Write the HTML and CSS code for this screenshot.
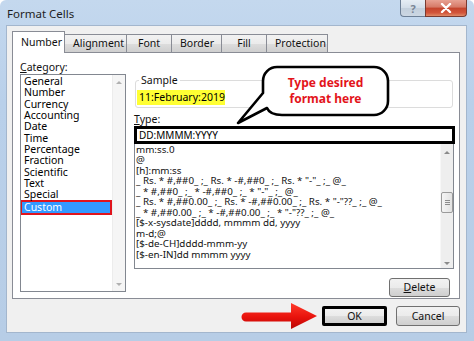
FILE: index.html
```html
<!DOCTYPE html>
<html>
<head>
<meta charset="utf-8">
<link rel="stylesheet" href="styles.css">
</head>
<body>
<div class="window">
  <div class="titlebar">
    <span class="title">Format Cells</span>
    <div class="caption-btns">
      <div class="cap-btn help">?</div>
      <div class="cap-btn close">
        <svg width="12" height="10" viewBox="0 0 12 10"><path d="M2 1 L10 9 M10 1 L2 9" stroke="#fff" stroke-width="2.4" stroke-linecap="round"/></svg>
      </div>
    </div>
  </div>
  <div class="client">
    <div class="tabs">
      <div class="tab active">Number</div>
      <div class="tab">Alignment</div>
      <div class="tab">Font</div>
      <div class="tab">Border</div>
      <div class="tab">Fill</div>
      <div class="tab">Protection</div>
    </div>
    <div class="panel">
      <div class="left">
        <div class="label"><u>C</u>ategory:</div>
        <div class="catlist">
          <div class="items">
            <div class="item">General</div>
            <div class="item">Number</div>
            <div class="item">Currency</div>
            <div class="item">Accounting</div>
            <div class="item">Date</div>
            <div class="item">Time</div>
            <div class="item">Percentage</div>
            <div class="item">Fraction</div>
            <div class="item">Scientific</div>
            <div class="item">Text</div>
            <div class="item">Special</div>
            <div class="item selected">Custom</div>
          </div>
          <div class="vscroll plain">
            <span class="arr up"></span>
            <span class="arr down"></span>
          </div>
        </div>
      </div>
      <div class="right">
        <fieldset class="sample">
          <legend>Sample</legend>
          <span class="sample-val">11:February:2019</span>
        </fieldset>
        <div class="label type-label"><u>T</u>ype:</div>
        <div class="type-input">DD:MMMM:YYYY</div>
        <div class="fmtlist">
          <div class="items">
            <div class="fitem">mm:ss.0</div>
            <div class="fitem">@</div>
            <div class="fitem">[h]:mm:ss</div>
            <div class="fitem">_ Rs. * #,##0_ ;_ Rs. * -#,##0_ ;_ Rs. * "-"_ ;_ @_</div>
            <div class="fitem">_ * #,##0_ ;_ * -#,##0_ ;_ * "-"_ ;_ @_</div>
            <div class="fitem">_ Rs. * #,##0.00_ ;_ Rs. * -#,##0.00_ ;_ Rs. * "-"??_ ;_ @_</div>
            <div class="fitem">_ * #,##0.00_ ;_ * -#,##0.00_ ;_ * "-"??_ ;_ @_</div>
            <div class="fitem">[$-x-sysdate]dddd, mmmm dd, yyyy</div>
            <div class="fitem">m-d;@</div>
            <div class="fitem">[$-de-CH]dddd-mmm-yy</div>
            <div class="fitem">[$-en-IN]dd mmmm yyyy</div>
          </div>
          <div class="vscroll">
            <span class="arr up"></span>
            <span class="thumb"><i></i><i></i><i></i></span>
            <span class="arr down"></span>
          </div>
        </div>
        <div class="delete-row"><div class="btn delete"><u>D</u>elete</div></div>
      </div>
    </div>
    <div class="buttons">
      <div class="btn ok">OK</div>
      <div class="btn cancel">Cancel</div>
    </div>
  </div>

  <div class="callout">
    <svg class="bubble" width="156" height="62" viewBox="0 0 156 62">
      <path d="M27 28 V16 A14 14 0 0 1 41 2 H138 A14 14 0 0 1 152 16 V36 A14 14 0 0 1 138 50 H46 Q34 50 31 43 L2 58 Z" fill="#fff" stroke="#000" stroke-width="2.6" stroke-linejoin="round"/>
    </svg>
    <div class="callout-text">Type desired<br>format here</div>
  </div>

  <svg class="arrow" width="80" height="30" viewBox="0 0 80 30">
    <defs>
      <linearGradient id="rg" x1="0" y1="0" x2="0" y2="1">
        <stop offset="0" stop-color="#ff3b2b"/>
        <stop offset="0.55" stop-color="#e8120c"/>
        <stop offset="1" stop-color="#b80806"/>
      </linearGradient>
    </defs>
    <path d="M5 10.5 H50 V1 L76 14 L50 27 V19.5 H5 A4.5 4.5 0 0 1 5 10.5 Z" fill="url(#rg)"/>
  </svg>
</div>
</body>
</html>
```

FILE: styles.css
```css
* { box-sizing: border-box; }
html, body { margin: 0; padding: 0; }
body {
  width: 474px;
  height: 341px;
  overflow: hidden;
  background: #ffffff;
  font-family: "Noto Sans", "Open Sans", sans-serif;
  color: #000;
}
.window {
  position: relative;
  width: 474px;
  height: 341px;
  display: flex;
  flex-direction: column;
  background: linear-gradient(180deg, #c4d8ee 0%, #b9d0ea 30%, #b7cde6 100%);
  border-radius: 6px 6px 0 0;
}
.titlebar {
  height: 25px;
  display: flex;
  align-items: flex-start;
  justify-content: space-between;
  padding-right: 7px;
}
.title {
  font-size: 11.5px;
  line-height: 14px;
  margin: 7px 0 0 7px;
  color: #1e1e1e;
}
.caption-btns { display: flex; }
.cap-btn {
  height: 17px;
  display: flex;
  align-items: center;
  justify-content: center;
  border: 1px solid #6d7f96;
  border-top: none;
}
.help {
  width: 25px;
  border-radius: 0 0 0 4px;
  border-right: none;
  background: linear-gradient(180deg, #e6edf4 0%, #d3dde8 50%, #c3cfdc 51%, #ccd7e3 100%);
  color: #7a8595;
  font-size: 11px;
  font-weight: bold;
}
.close {
  width: 42px;
  border-radius: 0 0 4px 0;
  border-color: #7a3a30;
  background: linear-gradient(180deg, #e8a293 0%, #d67966 45%, #c4442c 50%, #d2543a 80%, #e08a66 100%);
}
.client {
  margin: 0 7px 8px 6px;
  flex: 1;
  background: #f0f0f0;
  border: 1px solid #a3b6cd;
  padding: 5px 6px 0 5px;
  display: flex;
  flex-direction: column;
}
.tabs {
  display: flex;
  align-items: flex-end;
  height: 21px;
  position: relative;
  z-index: 2;
}
.tab {
  height: 18px;
  padding: 0 8px;
  font-size: 10.5px;
  line-height: 16px;
  border: 1px solid #898c95;
  border-bottom: none;
  border-left: none;
  background: linear-gradient(180deg, #f2f2f2 0%, #ebebeb 50%, #dddddd 51%, #cfcfcf 100%);
  text-align: center;
  color: #111;
}
.tab:nth-child(2) { width: 62px; }
.tab:nth-child(3) { width: 45px; }
.tab:nth-child(4) { width: 50px; }
.tab:nth-child(5) { width: 45px; }
.tab:nth-child(6) { width: 61px; }
.tab.active {
  width: 53px;
  height: 22px;
  margin-bottom: -1px;
  background: #ffffff;
  border-left: 1px solid #898c95;
  line-height: 21px;
}
.panel {
  width: 448px;
  height: 247px;
  border: 1px solid #898c95;
  background: #ffffff;
  display: flex;
  padding: 8px 4px 0 7px;
  gap: 8px;
}
.label {
  font-size: 10.5px;
  line-height: 13px;
  height: 13px;
  color: #111;
}
.left { width: 106px; display: flex; flex-direction: column; }
.catlist {
  height: 218px;
  border: 1px solid #828790;
  display: flex;
  background: #fff;
}
.catlist .items {
  flex: 1;
  padding-top: 1px;
  font-size: 10.5px;
  line-height: 11.35px;
}
.item { padding-left: 3px; white-space: nowrap; }
.item.selected {
  background: #3399ff;
  color: #fff;
  border: 2px solid #e0141c;
  border-left-width: 1px;
  height: 15px;
  line-height: 11px;
  margin-top: -1px;
  padding-left: 2px;
}
.vscroll {
  width: 13px;
  background: #f2f2f2;
  border-left: 1px solid #ececec;
  display: flex;
  flex-direction: column;
  align-items: center;
  padding: 6px 0 5px;
  position: relative;
}
.vscroll.plain { background: #f5f5f5; }
.arr {
  width: 0; height: 0;
  border-left: 3px solid transparent;
  border-right: 3px solid transparent;
}
.arr.up { border-bottom: 3px solid #8a8a8a; }
.arr.down { border-top: 3px solid #8a8a8a; margin-top: auto; }
.vscroll.plain .arr.up, .vscroll.plain .arr.down { border-bottom-color: #b0b0b0; border-top-color: #b0b0b0; }
.thumb {
  margin-top: auto;
  width: 12px;
  height: 21px;
  border: 1px solid #9a9a9a;
  border-radius: 2px;
  background: linear-gradient(90deg, #f4f4f4, #e2e2e2);
  display: flex;
  flex-direction: column;
  align-items: center;
  justify-content: center;
  gap: 1px;
  margin-bottom: 12px;
}
.thumb i { display: block; width: 5px; height: 1px; background: #8c8c8c; }

.right { width: 321px; display: flex; flex-direction: column; }
.sample {
  margin: 13px 2px 0 1px;
  padding: 2px 0 2px 1px;
  border: 1px solid #dcdcdc;
  border-radius: 3px;
  height: 34px;
  min-width: 0;
}
.sample legend {
  font-size: 10.5px;
  line-height: 13px;
  padding: 0 2px;
  margin-left: 2px;
  color: #111;
}
.sample-val {
  display: inline-block;
  background: #ffff33;
  font-size: 10.5px;
  line-height: 15px;
  padding: 0 3px 0 2px;
  width: 88px;
  margin-top: 1px;
  vertical-align: top;
}
.type-label { margin-top: 5px; }
.type-input {
  height: 18px;
  border: 3px solid #000;
  font-size: 10px;
  line-height: 12px;
  padding-left: 2px;
  background: #fff;
}
.fmtlist {
  height: 125px;
  width: 320px;
  border: 1px solid #828790;
  border-top: none;
  display: flex;
  background: #fff;
}
.fmtlist .items {
  flex: 1;
  padding-top: 1px;
  font-size: 9.8px;
  line-height: 10.45px;
  overflow: hidden;
}
.fitem { padding-left: 1px; white-space: pre; color: #111; }
.fmtlist .vscroll { background: #eeeeee; border-left: 1px solid #f7f7f7; padding-top: 7px; padding-bottom: 3px; }
.delete-row { display: flex; justify-content: flex-end; padding-right: 5px; margin-top: 9px; }
.btn {
  height: 19px;
  border: 1px solid #707070;
  border-radius: 3px;
  background: linear-gradient(180deg, #f2f2f2 0%, #ebebeb 50%, #dddddd 51%, #cfcfcf 100%);
  font-size: 10.5px;
  line-height: 17px;
  text-align: center;
  color: #111;
}
.delete { width: 61px; }
.buttons {
  display: flex;
  justify-content: flex-end;
  gap: 9px;
  margin-top: 7px;
}
.ok {
  width: 65px;
  height: 20px;
  border: 3px solid #000;
  border-radius: 2px;
  line-height: 14px;
}
.cancel { width: 64px; height: 20px; line-height: 18px; }

.callout {
  position: absolute;
  left: 236px;
  top: 65px;
  width: 156px;
  height: 62px;
}
.bubble { position: absolute; left: 0; top: 0; }
.callout-text {
  position: absolute;
  left: 27px;
  top: 2px;
  width: 125px;
  height: 48px;
  display: flex;
  align-items: center;
  justify-content: center;
  text-align: center;
  color: #e3141b;
  font-weight: bold;
  font-size: 12px;
  line-height: 16px;
}
.arrow {
  position: absolute;
  left: 241px;
  top: 302px;
}
```
